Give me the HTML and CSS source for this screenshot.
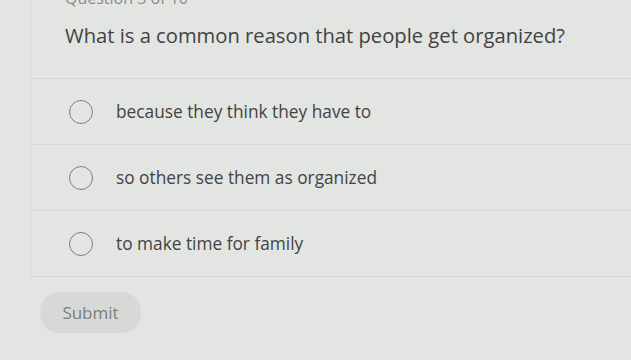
FILE: index.html
```html
<!doctype html>
<html>
    <head>
        <meta charset='utf-8'>
        <title>Quiz</title>
        <link rel="stylesheet" href="styles.css">
    </head>
    <body>
        <div class='quiz'>
            <div class='card'>
                <p class='counter'>Question 3 of 10</p>
                <h3 class='question'>What is a common reason that people get organized?</h3>
                <ul class='options'>
                    <li class='option'><span class='radio'></span><span class='label'>because they think they have to</span></li>
                    <li class='option'><span class='radio'></span><span class='label'>so others see them as organized</span></li>
                    <li class='option'><span class='radio'></span><span class='label'>to make time for family</span></li>
                </ul>
            </div>
            <button class='submit'>Submit</button>
        </div>
    </body>
</html>
```

FILE: styles.css
```css
html,body,ul,li,p,h3 {
    padding:0;
    margin:0;
}
ul,li {
    list-style:none;
}
body {
    background:#e2e5e2;
    font-family:'Open Sans','Noto Sans',sans-serif;
    color:#474747;
    overflow:hidden;
}
.quiz {
    padding-left:30px;
}
.card {
    border-left:1px solid #d6d9d6;
    border-bottom:1px solid #d3d6d3;
    margin-top:-12px;
}
.counter {
    padding-left:34px;
    font-size:16px;
    line-height:20px;
    color:#8a8a8a;
}
.question {
    padding:14px 0 0 34px;
    height:56px;
    font-size:20.2px;
    font-weight:normal;
    line-height:26px;
    color:#424242;
}
.options {
    border-top:1px solid #d3d6d3;
}
.option {
    display:flex;
    align-items:center;
    height:65px;
    padding-left:38px;
    border-bottom:1px solid #d5d8d5;
    font-size:17.3px;
    color:#434343;
}
.option:last-child {
    border-bottom:none;
}
.radio {
    width:22px;
    height:22px;
    border:1.5px solid #7d7d7d;
    border-radius:50%;
    margin-right:23px;
    flex-shrink:0;
}
.submit {
    margin:15px 0 0 10px;
    width:101px;
    height:41px;
    border:none;
    border-radius:20px;
    background:#d6d9d6;
    color:#7c7e7c;
    font-family:'Open Sans','Noto Sans',sans-serif;
    font-size:17px;
}
```
